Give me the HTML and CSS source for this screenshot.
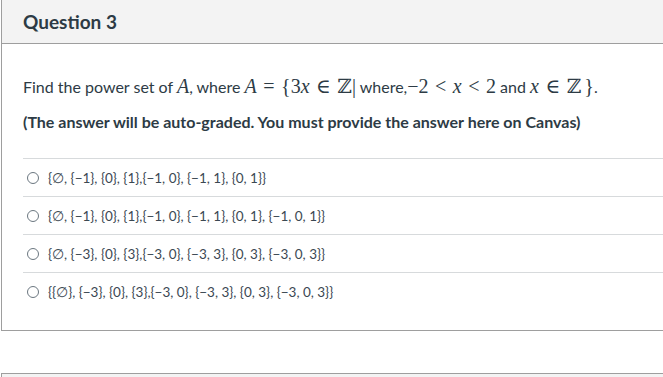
FILE: index.html
```html
<!DOCTYPE html>
<html lang="en">
  <head>
    <meta charset="UTF-8" />
    <title>Question 3</title>
    <link rel="stylesheet" href="styles.css">
  </head>
  <body>
    <div class="question">
      <div class="header">
        <h3>Question 3</h3>
      </div>
      <div class="content">
        <p class="text">
          Find the power set of <span class="m">A</span>, where
          <span class="m">A</span><span class="op">=</span><span class="r">{3</span><span class="m">x</span><span class="op">∈</span><span class="r">ℤ|</span> where,<span class="r">−2</span><span class="op">&lt;</span><span class="m">x</span><span class="op">&lt;</span><span class="r">2</span> and
          <span class="m">x</span><span class="op">∈</span><span class="r">ℤ</span><span class="r sp">}</span>.
        </p>
        <p class="bold">(The answer will be auto-graded. You must provide the answer here on Canvas)</p>
        <ul class="answers">
          <li><span class="radio"></span>{∅, {−1}, {0}, {1},{−1, 0}, {−1, 1}, {0, 1}}</li>
          <li><span class="radio"></span>{∅, {−1}, {0}, {1},{−1, 0}, {−1, 1}, {0, 1}, {−1, 0, 1}}</li>
          <li><span class="radio"></span>{∅, {−3}, {0}, {3},{−3, 0}, {−3, 3}, {0, 3}, {−3, 0, 3}}</li>
          <li><span class="radio"></span>{{∅}, {−3}, {0}, {3},{−3, 0}, {−3, 3}, {0, 3}, {−3, 0, 3}}</li>
        </ul>
      </div>
    </div>
    <div class="question next">
      <div class="header"></div>
    </div>
  </body>
</html>
```

FILE: styles.css
```css
body {
  margin: 0;
  padding: 0;
  background: #fff;
  font-family: Lato, "Liberation Sans", sans-serif;
  color: #2d3b45;
  overflow: hidden;
}
.question {
  margin-left: 1px;
  margin-right: -20px;
  border: 1px solid #9e9e9e;
  border-top: none;
}
.header {
  height: 43px;
  background: #f3f3f3;
  border-bottom: 1px solid #9e9e9e;
  display: flex;
  align-items: center;
  padding-left: 21px;
}
.header h3 {
  margin: 0;
  font-size: 19px;
  font-weight: bold;
  color: #2d3b45;
}
.content {
  padding: 30px 0 20px 21px;
}
.text {
  margin: 0;
  font-size: 16px;
  line-height: 24px;
}
.m {
  font-family: "Liberation Serif", "DejaVu Serif", serif;
  font-style: italic;
  font-size: 20px;
}
.r,
.op {
  font-family: "Liberation Serif", "DejaVu Serif", serif;
  font-size: 20px;
}
.op {
  margin: 0 6.5px;
}
.sp {
  margin-left: 3px;
}
.bold {
  margin: 11px 0 0;
  font-size: 16px;
  font-weight: bold;
  line-height: 24px;
}
.answers {
  list-style: none;
  margin: 24px 0 0;
  padding: 0;
}
.answers li {
  height: 37px;
  border-top: 1px solid #d7dadc;
  display: flex;
  align-items: center;
  padding-left: 4px;
  font-size: 13.5px;
  color: #3b4852;
}
.radio {
  width: 10px;
  height: 10px;
  border: 1px solid #6b7780;
  border-radius: 50%;
  margin-right: 9px;
}
.next {
  margin-top: 42px;
  border-bottom: none;
}
.next .header {
  border-bottom: none;
  border-top: 1px solid #9e9e9e;
}
```
